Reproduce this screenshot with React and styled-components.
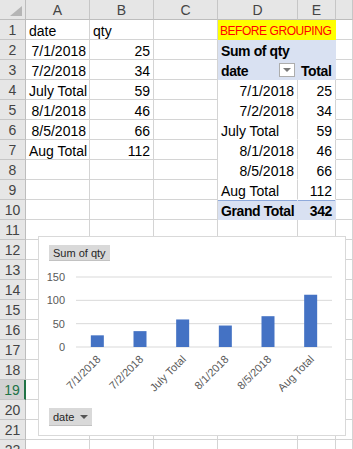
import React from "react";
import styled, { createGlobalStyle } from "styled-components";

const GlobalStyle = createGlobalStyle`
  *, *::before, *::after { box-sizing: border-box; }
  html, body { margin: 0; padding: 0; background: #fff; overflow: hidden; }
  body { font-family: "Liberation Sans", Arial, sans-serif; }
`;

const BLUE = "#d9e1f2";
const GRID = "#d4d4d4";

const Sheet = styled.div`
  position: relative;
  width: 353px;
  height: 449px;
  overflow: hidden;
  display: grid;
  grid-template-columns: 26px 64px 64px 64px 80px 38px 1fr;
  grid-auto-rows: 20px;
  font-size: 14px;
  color: #000;
`;

const Corner = styled.div`
  background: #e6e6e6;
  border-right: 1px solid #bdbdbd;
  border-bottom: 1px solid #bdbdbd;
  display: flex;
  align-items: flex-end;
  justify-content: flex-end;
  padding: 0 3px 3px 0;
  &::after {
    content: "";
    width: 0;
    height: 0;
    border-left: 12px solid transparent;
    border-bottom: 10px solid #b5b5b5;
  }
`;

const ColHead = styled.div`
  background: #e6e6e6;
  border-right: 1px solid #c6c6c6;
  border-bottom: 1px solid #bdbdbd;
  color: #444;
  display: flex;
  align-items: center;
  justify-content: center;
  padding-top: 1px;
`;

const RowHead = styled.div`
  background: ${p => (p.$selected ? "#d2d2d2" : "#e6e6e6")};
  border-right: ${p => (p.$selected ? "2px solid #217346" : "1px solid #bdbdbd")};
  border-bottom: 1px solid #c6c6c6;
  color: ${p => (p.$selected ? "#217346" : "#444")};
  display: flex;
  align-items: center;
  justify-content: center;
  padding-top: 1px;
`;

const Cell = styled.div`
  grid-column: span ${p => p.$span || 1};
  background: ${p => p.$fill || "#fff"};
  border-right: 1px solid ${p => p.$fill || GRID};
  border-bottom: 1px solid ${p => (p.$fill ? p.$fill : p.$plain ? "#fff" : GRID)};
  box-shadow: ${p => (p.$topLine ? "inset 0 1px 0 #8ea9db" : "none")};
  color: ${p => p.$color || "#000"};
  font-weight: ${p => (p.$bold ? 700 : 400)};
  letter-spacing: ${p => (p.$bold ? "-0.4px" : "0")};
  display: flex;
  align-items: center;
  justify-content: ${p => (p.$align === "right" ? "flex-end" : "space-between")};
  padding: 2px 3px 0 3px;
  white-space: nowrap;
`;

const Banner = styled(Cell)`
  font-size: 12px;
  letter-spacing: -0.45px;
  padding-left: 2px;
  justify-content: flex-start;
`;

const DropBtn = styled.span`
  width: 16px;
  height: 14px;
  margin-right: -1px;
  margin-top: -1px;
  background: #fff;
  border: 1px solid #adadad;
  display: flex;
  align-items: center;
  justify-content: center;
  &::after {
    content: "";
    border-left: 4px solid transparent;
    border-right: 4px solid transparent;
    border-top: 4px solid #7a7a7a;
  }
`;

const Chart = styled.div`
  position: absolute;
  left: 38px;
  top: 236px;
  width: 308px;
  height: 200px;
  background: #fff;
  border: 1px solid #d9d9d9;
  display: flex;
  flex-direction: column;
  align-items: flex-start;
  font-size: 11px;
`;

const FieldButton = styled.div`
  margin: ${p => p.$top || 0}px 0 0 10px;
  height: ${p => p.$h}px;
  padding: 0 4px 0 4px;
  background: #d9d9d9;
  border-bottom: 1px solid #c2c2c2;
  color: #262626;
  display: flex;
  align-items: center;
  gap: 6px;
  &::after {
    content: ${p => (p.$drop ? '""' : "none")};
    border-left: 4px solid transparent;
    border-right: 4px solid transparent;
    border-top: 4px solid #555;
  }
`;

const Plot = styled.svg`
  display: block;
  font-family: "Liberation Sans", Arial, sans-serif;
  font-size: 11px;
`;

const bars = [
  { label: "7/1/2018", value: 25 },
  { label: "7/2/2018", value: 34 },
  { label: "July Total", value: 59 },
  { label: "8/1/2018", value: 46 },
  { label: "8/5/2018", value: 66 },
  { label: "Aug Total", value: 112 },
];

const QtyChart = () => {
  const zero = 86;
  const scale = 70 / 150;
  const x0 = 37;
  const step = (293 - x0) / bars.length;
  return (
    <Chart>
      <FieldButton $top={8} $h={16}>Sum of qty</FieldButton>
      <Plot width="306" height="147">
        {[0, 50, 100, 150].map(v => {
          const y = zero - v * scale;
          return (
            <g key={v}>
              <line x1={x0} x2={293} y1={y} y2={y} stroke="#d9d9d9" strokeWidth="1" />
              <text x="26" y={y + 4} textAnchor="end" fill="#595959">{v}</text>
            </g>
          );
        })}
        {bars.map((b, i) => {
          const cx = x0 + step * (i + 0.5);
          const h = b.value * scale;
          const lx = cx + 4;
          const ly = zero + 13;
          return (
            <g key={b.label}>
              <rect x={cx - 6.5} y={zero - h} width="13" height={h} fill="#4472c4" />
              <text
                x={lx}
                y={ly}
                textAnchor="end"
                fill="#595959"
                transform={`rotate(-45 ${lx} ${ly})`}
              >
                {b.label}
              </text>
            </g>
          );
        })}
      </Plot>
      <FieldButton $h={18} $drop>date</FieldButton>
    </Chart>
  );
};

const R = "right";
const data = [
  [{ t: "date" }, { t: "qty" }, {}, { t: "BEFORE GROUPING", banner: true }],
  [{ t: "7/1/2018", a: R }, { t: "25", a: R }, {}, { t: "Sum of qty", bold: true, fill: BLUE }, { fill: BLUE }],
  [{ t: "7/2/2018", a: R }, { t: "34", a: R }, {}, { t: "date", bold: true, fill: BLUE, drop: true }, { t: "Total", bold: true, fill: BLUE }],
  [{ t: "July Total" }, { t: "59", a: R }, {}, { t: "7/1/2018", a: R, plain: true }, { t: "25", a: R, plain: true }],
  [{ t: "8/1/2018", a: R }, { t: "46", a: R }, {}, { t: "7/2/2018", a: R, plain: true }, { t: "34", a: R, plain: true }],
  [{ t: "8/5/2018", a: R }, { t: "66", a: R }, {}, { t: "July Total", plain: true }, { t: "59", a: R, plain: true }],
  [{ t: "Aug Total" }, { t: "112", a: R }, {}, { t: "8/1/2018", a: R, plain: true }, { t: "46", a: R, plain: true }],
  [{}, {}, {}, { t: "8/5/2018", a: R, plain: true }, { t: "66", a: R, plain: true }],
  [{}, {}, {}, { t: "Aug Total", plain: true }, { t: "112", a: R, plain: true }],
  [{}, {}, {}, { t: "Grand Total", bold: true, fill: BLUE, top: true }, { t: "342", a: R, bold: true, fill: BLUE, top: true }],
];

const renderRow = cells => {
  const out = [];
  let used = 0;
  cells.forEach((c, i) => {
    if (c.banner) {
      used += 2;
      out.push(
        <Banner key={i} $span={2} $fill="#ffff00" $color="#ff0000">{c.t}</Banner>
      );
      return;
    }
    used += 1;
    out.push(
      <Cell
        key={i}
        $align={c.a}
        $bold={c.bold}
        $fill={c.fill}
        $plain={c.plain}
        $topLine={c.top}
      >
        {c.t}
        {c.drop && <DropBtn />}
      </Cell>
    );
  });
  while (used < 6) {
    out.push(<Cell key={`e${used}`} />);
    used += 1;
  }
  return out;
};

const App = () => {
  const rows = Array.from({ length: 22 }, (_, i) => i + 1);
  return (
    <>
      <GlobalStyle />
      <Sheet>
        <Corner />
        {["A", "B", "C", "D", "E", ""].map((c, i) => (
          <ColHead key={i}>{c}</ColHead>
        ))}
        {rows.map(r => (
          <React.Fragment key={r}>
            <RowHead $selected={r === 19}>{r}</RowHead>
            {renderRow(data[r - 1] || [])}
          </React.Fragment>
        ))}
        <QtyChart />
      </Sheet>
    </>
  );
};

export default App;
